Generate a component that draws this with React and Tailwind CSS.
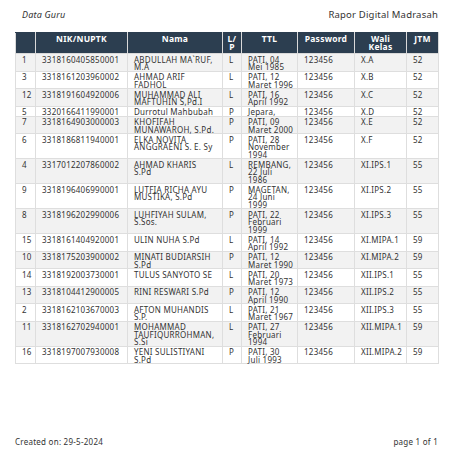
import React from 'react';

const rows = [
  ['1', '3318160405850001', 'ABDULLAH MA`RUF,\nM.A', 'L', 'PATI, 04\nMei 1985', '123456', 'X.A', '52'],
  ['3', '3318161203960002', 'AHMAD ARIF\nFADHOL', 'L', 'PATI, 12\nMaret 1996', '123456', 'X.B', '52'],
  ['12', '3318191604920006', 'MUHAMMAD ALI\nMAFTUHIN S,Pd.I', 'L', 'PATI, 16\nApril 1992', '123456', 'X.C', '52'],
  ['5', '3320166411990001', 'Durrotul Mahbubah', 'P', 'Jepara,', '123456', 'X.D', '52'],
  ['7', '3318164903000003', 'KHOFIFAH\nMUNAWAROH, S.Pd.', 'P', 'PATI, 09\nMaret 2000', '123456', 'X.E', '52'],
  ['6', '3318186811940001', 'ELKA NOVITA\nANGGRAENI S. E. Sy', 'P', 'PATI, 28\nNovember\n1994', '123456', 'X.F', '52'],
  ['4', '3317012207860002', 'AHMAD KHARIS\nS.Pd', 'L', 'REMBANG,\n22 Juli\n1986', '123456', 'XI.IPS.1', '55'],
  ['9', '3318196406990001', 'LUTFIA RICHA AYU\nMUSTIKA, S.Pd', 'P', 'MAGETAN,\n24 Juni\n1999', '123456', 'XI.IPS.2', '55'],
  ['8', '3318196202990006', 'LUHFIYAH SULAM,\nS.Sos.', 'P', 'PATI, 22\nFebruari\n1999', '123456', 'XI.IPS.3', '55'],
  ['15', '3318161404920001', 'ULIN NUHA S.Pd', 'L', 'PATI, 14\nApril 1992', '123456', 'XI.MIPA.1', '59'],
  ['10', '3318175203900002', 'MINATI BUDIARSIH\nS.Pd', 'P', 'PATI, 12\nMaret 1990', '123456', 'XI.MIPA.2', '59'],
  ['14', '3318192003730001', 'TULUS SANYOTO SE', 'L', 'PATI, 20\nMaret 1973', '123456', 'XII.IPS.1', '55'],
  ['13', '3318104412900005', 'RINI RESWARI S.Pd', 'P', 'PATI, 12\nApril 1990', '123456', 'XII.IPS.2', '55'],
  ['2', '3318162103670003', 'AFTON MUHANDIS\nS.P.', 'L', 'PATI, 21\nMaret 1967', '123456', 'XII.IPS.3', '55'],
  ['11', '3318162702940001', 'MOHAMMAD\nTAUFIQURROHMAN,\nS.Si', 'L', 'PATI, 27\nFebruari\n1994', '123456', 'XII.MIPA.1', '59'],
  ['16', '3318197007930008', 'YENI SULISTIYANI\nS.Pd', 'P', 'PATI, 30\nJuli 1993', '123456', 'XII.MIPA.2', '59'],
];

const headers = ['', 'NIK/NUPTK', 'Nama', 'L/\nP', 'TTL', 'Password', 'Wali\nKelas', 'JTM'];
const widths = ['w-[20px]', 'w-[92px]', 'w-[95px]', 'w-[19px]', 'w-[56px]', 'w-[57px]', 'w-[52px]', 'w-[32px]'];

export default function App() {
  return (
    <div className="w-[453px] h-[453px] bg-white flex flex-col text-[#333] font-['Noto_Sans',sans-serif]">
      <div className="flex justify-between items-center pl-[22px] pr-[15px] pt-[10px] h-[32px] pb-[12px]">
        <span className="italic text-[9px] tracking-[0.2px]">Data Guru</span>
        <span className="text-[9.5px] tracking-[0.2px]">Rapor Digital Madrasah</span>
      </div>

      <div className="px-[15px]">
        <table className="w-full table-fixed border-collapse text-[8px] tracking-[0.25px]">
          <colgroup>
            {widths.map((w, i) => (
              <col key={i} className={w} />
            ))}
          </colgroup>
          <thead>
            <tr className="bg-[#2c3e50] text-white">
              {headers.map((h, i) => (
                <th
                  key={i}
                  className="border border-[#d9d9d9] border-t-[#2c3e50] px-[1px] pt-[2px] pb-[2px] text-[8.5px] font-bold leading-[8px] text-center align-top whitespace-pre"
                >
                  {h}
                </th>
              ))}
            </tr>
          </thead>
          <tbody>
            {rows.map((r, ri) => (
              <tr key={ri} className={ri % 2 === 0 ? 'bg-[#f2f2f2]' : 'bg-white'}>
                {r.map((c, ci) => (
                  <td
                    key={ci}
                    className="border border-[#dedede] px-[6px] pt-[1.5px] pb-0 leading-[7.5px] align-top whitespace-pre overflow-visible"
                  >
                    {c}
                  </td>
                ))}
              </tr>
            ))}
          </tbody>
        </table>
      </div>

      <div className="mt-auto flex justify-between items-center px-[15px] pb-[3px] h-[20px] text-[8px] tracking-[0.25px]">
        <span>Created on: 29-5-2024</span>
        <span>page 1 of 1</span>
      </div>
    </div>
  );
}
